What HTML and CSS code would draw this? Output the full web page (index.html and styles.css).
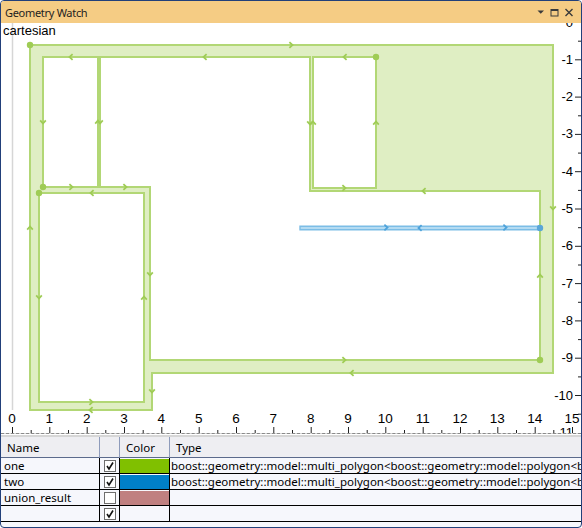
FILE: index.html
```html
<!DOCTYPE html>
<html>
<head>
<meta charset="utf-8">
<link rel="stylesheet" href="styles.css">
</head>
<body>
<div class="window">
  <div class="titlebar">
    <span class="title">Geometry Watch</span>
    <div class="controls">
      <svg class="ctl" width="8" height="6" viewBox="0 0 8 6"><path d="M0.5 1.5 H7 L3.75 4.8 Z" fill="#3a3a3a"/></svg>
      <svg class="ctl" width="9" height="9" viewBox="0 0 9 9"><rect x="1" y="1.5" width="7" height="6.5" fill="none" stroke="#3a3a3a" stroke-width="1"/><rect x="1" y="1" width="7" height="2" fill="#3a3a3a"/></svg>
      <svg class="ctl" width="10" height="9" viewBox="0 0 10 9"><path d="M1.5 1 L8.5 8 M8.5 1 L1.5 8" stroke="#3a3a3a" stroke-width="1.4"/></svg>
    </div>
  </div>
  <div class="plot">
    <div class="cs">cartesian</div>
    <svg class="canvas" width="580" height="410" viewBox="1 23 580 410">
      <defs>
        <path id="chev" d="M-1.6,-2.8 L1.5,0 L-1.6,2.8" fill="none" stroke-width="1.8"/>
      </defs>
      <line x1="12.5" y1="23" x2="12.5" y2="410" stroke="#d6d6d6" stroke-width="1.5"/>
      <!-- polygon one -->
      <path fill-rule="evenodd" fill="#dfeec3" stroke="#b2d775" stroke-width="2"
        d="M30,45 H553 V373 H152 V410 H30 Z
           M43,57 H98 V187 H43 Z
           M100,57 H310 V191 H540 V360 H150 V187 H100 Z
           M39,193 H144 V402 H39 Z
           M313,57 H376 V188 H313 Z"/>
      <g stroke="#9fcc55" fill="none">
        <use href="#chev" transform="translate(71,57) rotate(180)"/>
        <use href="#chev" transform="translate(43,122) rotate(90)"/>
        <use href="#chev" transform="translate(98,122) rotate(-90)"/>
        <use href="#chev" transform="translate(100,122) rotate(90)"/>
        <use href="#chev" transform="translate(71,187)"/>
        <use href="#chev" transform="translate(125,187)"/>
        <use href="#chev" transform="translate(92,193) rotate(180)"/>
        <use href="#chev" transform="translate(30,228) rotate(-90)"/>
        <use href="#chev" transform="translate(291,45)"/>
        <use href="#chev" transform="translate(205,57) rotate(180)"/>
        <use href="#chev" transform="translate(345,57) rotate(180)"/>
        <use href="#chev" transform="translate(310,123) rotate(90)"/>
        <use href="#chev" transform="translate(313,123) rotate(-90)"/>
        <use href="#chev" transform="translate(376,123) rotate(-90)"/>
        <use href="#chev" transform="translate(344,188)"/>
        <use href="#chev" transform="translate(424,191) rotate(180)"/>
        <use href="#chev" transform="translate(553,208) rotate(90)"/>
        <use href="#chev" transform="translate(39,297) rotate(90)"/>
        <use href="#chev" transform="translate(150,274) rotate(90)"/>
        <use href="#chev" transform="translate(144,298) rotate(-90)"/>
        <use href="#chev" transform="translate(152,391) rotate(90)"/>
        <use href="#chev" transform="translate(91,402)"/>
        <use href="#chev" transform="translate(91,410) rotate(180)"/>
        <use href="#chev" transform="translate(344,360)"/>
        <use href="#chev" transform="translate(352,373) rotate(180)"/>
        <use href="#chev" transform="translate(540,276) rotate(-90)"/>
      </g>
      <g fill="#9fcc55">
        <circle cx="30" cy="45" r="3.2"/>
        <circle cx="43" cy="187" r="3.2"/>
        <circle cx="39" cy="193" r="3.2"/>
        <circle cx="376" cy="57" r="3.2"/>
        <circle cx="540" cy="360" r="3.2"/>
      </g>
      <!-- polygon two -->
      <path d="M300,226.2 H540 V229.8 H300 Z" fill="#b4dbf2" stroke="#7cbde6" stroke-width="1.4"/>
      <g stroke="#4fa3db" fill="none">
        <use href="#chev" transform="translate(386,227.5)"/>
        <use href="#chev" transform="translate(420,228) rotate(180)"/>
        <use href="#chev" transform="translate(505,227.5)"/>
      </g>
      <circle cx="540" cy="228" r="3.2" fill="#5aa6d8"/>
      <!-- y axis -->
      <g class="ylab" text-anchor="end">
        <text x="573" y="26.5">0</text>
        <text x="573" y="63.8">-1</text>
        <text x="573" y="101.1">-2</text>
        <text x="573" y="138.4">-3</text>
        <text x="573" y="175.7">-4</text>
        <text x="573" y="213">-5</text>
        <text x="573" y="250.3">-6</text>
        <text x="573" y="287.6">-7</text>
        <text x="573" y="324.9">-8</text>
        <text x="573" y="362.2">-9</text>
        <text x="573" y="399.5">-10</text>
        <text x="573" y="436.8">-11</text>
      </g>
      <g stroke="#222" stroke-width="1">
        <path d="M575,22.5 H581 M575,59.8 H581 M575,97.1 H581 M575,134.4 H581 M575,171.7 H581 M575,209 H581 M575,246.3 H581 M575,283.6 H581 M575,320.9 H581 M575,358.2 H581 M575,395.5 H581"/>
        <path d="M578,41.2 H581 M578,78.5 H581 M578,115.8 H581 M578,153.1 H581 M578,190.4 H581 M578,227.7 H581 M578,265 H581 M578,302.3 H581 M578,339.6 H581 M578,376.9 H581 M578,414.2 H581"/>
      </g>
      <!-- x axis -->
      <g class="xlab" text-anchor="middle">
        <text x="12" y="423">0</text>
        <text x="49.3" y="423">1</text>
        <text x="86.7" y="423">2</text>
        <text x="124" y="423">3</text>
        <text x="161.3" y="423">4</text>
        <text x="198.7" y="423">5</text>
        <text x="236" y="423">6</text>
        <text x="273.3" y="423">7</text>
        <text x="310.7" y="423">8</text>
        <text x="348" y="423">9</text>
        <text x="385.3" y="423">10</text>
        <text x="422.7" y="423">11</text>
        <text x="460" y="423">12</text>
        <text x="497.3" y="423">13</text>
        <text x="534.7" y="423">14</text>
        <text x="572" y="423">15</text>
      </g>
      <g stroke="#222" stroke-width="1">
        <path d="M12.5,427 V433 M49.8,427 V433 M87.2,427 V433 M124.5,427 V433 M161.8,427 V433 M199.2,427 V433 M236.5,427 V433 M273.8,427 V433 M311.2,427 V433 M348.5,427 V433 M385.8,427 V433 M423.2,427 V433 M460.5,427 V433 M497.8,427 V433 M535.2,427 V433 M572.5,427 V433"/>
        <path d="M31.2,430 V433 M68.5,430 V433 M105.8,430 V433 M143.2,430 V433 M180.5,430 V433 M217.8,430 V433 M255.2,430 V433 M292.5,430 V433 M329.8,430 V433 M367.2,430 V433 M404.5,430 V433 M441.8,430 V433 M479.2,430 V433 M516.5,430 V433 M553.8,430 V433"/>
      </g>
    </svg>
  </div>
  <div class="splitter"></div>
  <div class="grid">
    <div class="hcell name">Name</div>
    <div class="hcell chk"></div>
    <div class="hcell color">Color</div>
    <div class="hcell type">Type</div>

    <div class="cell name">one</div>
    <div class="cell chk"><span class="box"><svg width="10" height="10" viewBox="0 0 10 10"><path d="M2 5 L4 8 L8 1.5" fill="none" stroke="#111" stroke-width="1.6"/></svg></span></div>
    <div class="cell color"><span class="swatch sw-one"></span></div>
    <div class="cell type">boost::geometry::model::multi_polygon&lt;boost::geometry::model::polygon&lt;boost::geometry::model::d2::point_xy&lt;double&gt; &gt; &gt;</div>

    <div class="cell name">two</div>
    <div class="cell chk"><span class="box"><svg width="10" height="10" viewBox="0 0 10 10"><path d="M2 5 L4 8 L8 1.5" fill="none" stroke="#111" stroke-width="1.6"/></svg></span></div>
    <div class="cell color"><span class="swatch sw-two"></span></div>
    <div class="cell type">boost::geometry::model::multi_polygon&lt;boost::geometry::model::polygon&lt;boost::geometry::model::d2::point_xy&lt;double&gt; &gt; &gt;</div>

    <div class="cell name">union_result</div>
    <div class="cell chk"><span class="box"></span></div>
    <div class="cell color"><span class="swatch sw-union"></span></div>
    <div class="cell type"></div>

    <div class="cell name"></div>
    <div class="cell chk"><span class="box"><svg width="10" height="10" viewBox="0 0 10 10"><path d="M2 5 L4 8 L8 1.5" fill="none" stroke="#111" stroke-width="1.6"/></svg></span></div>
    <div class="cell color"></div>
    <div class="cell type"></div>
  </div>
</div>
</body>
</html>
```
FILE: styles.css
```css
html, body {
  margin: 0;
  padding: 0;
  background: #ffffff;
}
.window {
  width: 582px;
  height: 528px;
  box-sizing: border-box;
  border: 1px solid #22407a;
  border-radius: 4px;
  overflow: hidden;
  display: flex;
  flex-direction: column;
  background: #f6f7fc;
  font-family: "Noto Sans", "Open Sans", sans-serif;
}
.titlebar {
  height: 22px;
  flex: none;
  background: #f5cc84;
  display: flex;
  align-items: center;
  justify-content: space-between;
  padding: 0 7px 0 4px;
}
.title {
  font-size: 11px;
  color: #1e1e1e;
  letter-spacing: -0.3px;
}
.controls {
  display: flex;
  align-items: center;
  gap: 5px;
}
.ctl {
  display: block;
}
.plot {
  position: relative;
  height: 410px;
  flex: none;
  background: #ffffff;
  overflow: hidden;
}
.cs {
  position: absolute;
  top: 0;
  left: 2px;
  font-family: "Liberation Sans", Arial, sans-serif;
  font-size: 13px;
  line-height: 15px;
  color: #000;
}
.canvas {
  display: block;
}
.ylab, .xlab {
  font-family: "Liberation Sans", Arial, sans-serif;
  font-size: 13px;
  fill: #000;
}
.xlab {
  font-size: 13.5px;
}
.splitter {
  height: 4px;
  flex: none;
  box-sizing: border-box;
  border-top: 1px dashed #8a8a8a;
  background: linear-gradient(#ffffff 0 1px, #d6d6d6 1px 3px);
}
.grid {
  display: grid;
  grid-template-columns: 99px 20px 50px 1fr;
  grid-template-rows: 21px repeat(4, 16px);
  font-size: 11.5px;
  color: #000;
}
.hcell {
  background: #eeeef2;
  border-right: 1px solid #8e9bbb;
  border-bottom: 1px solid #5b6a8c;
  display: flex;
  align-items: center;
  padding-left: 6px;
  white-space: nowrap;
  overflow: hidden;
}
.hcell.type {
  border-right: none;
}
.cell {
  border-right: 1px solid #000;
  border-bottom: 1px solid #000;
  display: flex;
  align-items: center;
  white-space: nowrap;
  overflow: hidden;
  background: #f6f7fc;
  padding-left: 3px;
}
.cell.type {
  border-right: none;
  padding-left: 1px;
}
.cell.chk {
  padding-left: 4px;
}
.cell.color {
  padding-left: 0;
  align-items: stretch;
}
.box {
  width: 10px;
  height: 10px;
  border: 1px solid #6e6e6e;
  background: #fff;
  display: flex;
  align-items: center;
  justify-content: center;
}
.box svg {
  display: block;
}
.swatch {
  flex: 1;
  margin: 1px 0 0 0;
}
.sw-one { background: #80c000; }
.sw-two { background: #0080c8; }
.sw-union { background: #c08080; }
```
